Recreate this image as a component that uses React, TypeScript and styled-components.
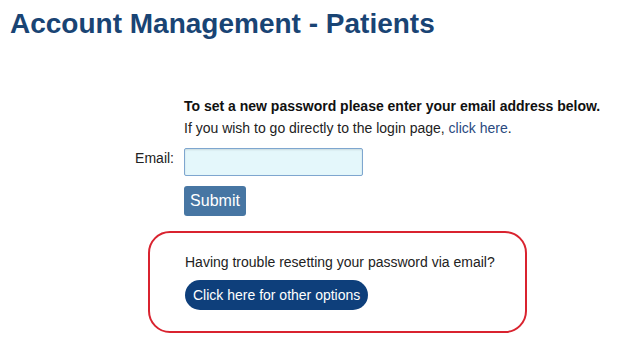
import React from 'react';
import styled, { createGlobalStyle } from 'styled-components';

const GlobalStyle = createGlobalStyle`
  body {
    margin: 0;
    background: #ffffff;
    font-family: "Liberation Sans", Arial, sans-serif;
    color: #222;
  }
`;

const Page = styled.div`
  width: 637px;
  height: 358px;
  overflow: hidden;
  padding-top: 8px;
  box-sizing: border-box;
`;

const Title = styled.h1`
  margin: 0 0 0 10px;
  font-size: 28px;
  font-weight: bold;
  color: #194474;
  line-height: 32px;
`;

const Form = styled.div`
  display: grid;
  grid-template-columns: 174px auto;
  column-gap: 10px;
  margin-top: 55px;
`;

const Intro = styled.div`
  grid-column: 2;
  font-size: 14px;
  line-height: 22px;
`;

const Lead = styled.div`
  font-weight: bold;
  color: #111;
`;

const Link = styled.a`
  color: #2a4a80;
  text-decoration: none;
`;

const Label = styled.label`
  grid-column: 1;
  justify-self: end;
  align-self: center;
  font-size: 14px;
  color: #222;
`;

const Input = styled.input`
  grid-column: 2;
  width: 179px;
  height: 28px;
  box-sizing: border-box;
  margin-top: 9px;
  border: 1px solid #7ea6cf;
  border-radius: 2px;
  background: #e4f7fb;
  box-shadow: inset 0 1px 2px rgba(0, 0, 0, 0.12);
  outline: none;
  padding: 0 6px;
  font-size: 13px;
`;

const Submit = styled.button`
  grid-column: 2;
  justify-self: start;
  margin-top: 10px;
  width: 62px;
  height: 30px;
  border: none;
  border-radius: 3px;
  background: #4776a3;
  color: #fff;
  font-family: inherit;
  font-size: 16px;
  padding: 0;
`;

const HelpBox = styled.div`
  margin: 15px 0 0 148px;
  width: 379px;
  height: 102px;
  box-sizing: border-box;
  border: 2px solid #d9232f;
  border-radius: 22px;
  padding: 20px 0 0 35px;
`;

const HelpText = styled.div`
  font-size: 14px;
  color: #222;
  line-height: 18px;
`;

const Pill = styled.button`
  margin-top: 9px;
  height: 30px;
  padding: 0 8px;
  border: none;
  border-radius: 15px;
  background: #0e3f7b;
  color: #fff;
  font-family: inherit;
  font-size: 14px;
`;

export default function App() {
  return (
    <Page>
      <GlobalStyle />
      <Title>Account Management - Patients</Title>
      <Form>
        <Intro>
          <Lead>To set a new password please enter your email address below.</Lead>
          <div>
            If you wish to go directly to the login page, <Link href="#">click here</Link>.
          </div>
        </Intro>
        <Label htmlFor="email">Email:</Label>
        <Input id="email" type="text" />
        <Submit>Submit</Submit>
      </Form>
      <HelpBox>
        <HelpText>Having trouble resetting your password via email?</HelpText>
        <Pill>Click here for other options</Pill>
      </HelpBox>
    </Page>
  );
}
